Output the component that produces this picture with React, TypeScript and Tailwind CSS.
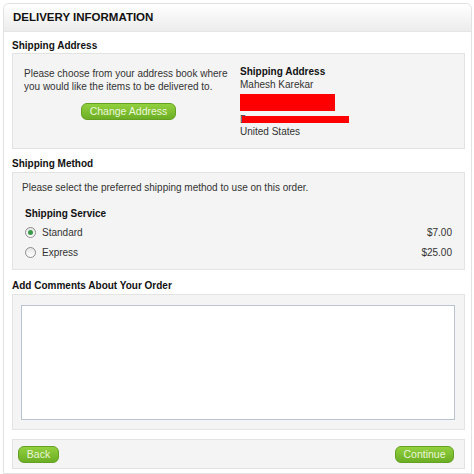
import React from "react";

const font = { fontFamily: '"Liberation Sans", Arial, sans-serif' };

function GreenButton({ children, className = "" }: { children: React.ReactNode; className?: string }) {
  return (
    <button
      className={`rounded-[6px] border border-[#64a022] bg-gradient-to-b from-[#92d03e] to-[#6cae24] text-[10.5px] leading-none text-[#eaf6da] ${className}`}
    >
      {children}
    </button>
  );
}

function Radio({ checked }: { checked?: boolean }) {
  return (
    <span className="flex h-[11px] w-[11px] items-center justify-center rounded-full border border-[#8d8d8d] bg-gradient-to-b from-[#e6e6e6] to-white">
      {checked && <span className="h-[5px] w-[5px] rounded-full bg-[#3a9a4a]" />}
    </span>
  );
}

export default function App() {
  const services = [
    { name: "Standard", price: "$7.00", checked: true },
    { name: "Express", price: "$25.00" },
  ];

  return (
    <div className="h-[474px] w-[474px] bg-white pl-[3px] pt-[3px] text-[#333]" style={font}>
      <div className="w-[469px] rounded-t-[6px] border border-[#e2e2e2]">
        {/* Header */}
        <div className="flex h-[28px] items-center rounded-t-[6px] border-b border-[#e6e6e6] bg-gradient-to-b from-white to-[#ececec] pl-[9px]">
          <h1 className="text-[11.5px] font-bold text-[#111]">DELIVERY INFORMATION</h1>
        </div>

        <div className="px-[8px] pb-[4px] text-[10px] leading-[13px]">
          {/* Shipping Address */}
          <h2 className="pt-[7px] font-bold text-[#111]">Shipping Address</h2>
          <div className="mt-[1px] flex h-[96px] w-[453px] border border-[#e3e3e3] bg-[#f4f4f4]">
            <div className="w-[227px] pl-[11px] pt-[13px]">
              <p>
                Please choose from your address book where
                <br />
                you would like the items to be delivered to.
              </p>
              <div className="mt-[10px] flex pl-[57px]">
                <GreenButton className="h-[17px] w-[95px]">Change Address</GreenButton>
              </div>
            </div>
            <div className="pt-[11px]">
              <p className="font-bold text-[#111]">Shipping Address</p>
              <p>Mahesh Karekar</p>
              <div className="mt-[3px] h-[17px] w-[95px] bg-[#f00]" />
              <div className="mt-[2px] flex items-center">
                <span>D</span>
                <span className="ml-[-5px] h-[7px] w-[107px] bg-[#f00]" />
              </div>
              <p className="-mt-[1px]">United States</p>
            </div>
          </div>

          {/* Shipping Method */}
          <h2 className="pt-[8px] font-bold text-[#111]">Shipping Method</h2>
          <div className="mt-[2px] h-[98px] w-[453px] border border-[#e3e3e3] bg-[#f4f4f4] pl-[9px] pr-[12px] pt-[8px]">
            <p>Please select the preferred shipping method to use on this order.</p>
            <p className="mt-[13px] pl-[3px] font-bold text-[#111]">Shipping Service</p>
            <div className="mt-[6px] flex flex-col gap-[7px] pl-[3px]">
              {services.map((s) => (
                <div key={s.name} className="flex items-center">
                  <Radio checked={s.checked} />
                  <span className="ml-[6px] flex-1">{s.name}</span>
                  <span>{s.price}</span>
                </div>
              ))}
            </div>
          </div>

          {/* Comments */}
          <h2 className="pt-[9px] font-bold text-[#111]">Add Comments About Your Order</h2>
          <div className="mt-[2px] h-[136px] w-[453px] border border-[#e3e3e3] bg-[#f4f4f4] px-[8px] pt-[10px]">
            <textarea className="block h-[115px] w-[434px] resize-none border border-[#b9c2cf] bg-white" />
          </div>

          {/* Footer */}
          <div className="mt-[9px] flex h-[30px] w-[453px] items-center justify-between border border-[#e3e3e3] bg-[#f4f4f4] pl-[5px] pr-[10px]">
            <GreenButton className="h-[17px] w-[41px]">Back</GreenButton>
            <GreenButton className="h-[17px] w-[59px]">Continue</GreenButton>
          </div>
        </div>
      </div>
    </div>
  );
}
